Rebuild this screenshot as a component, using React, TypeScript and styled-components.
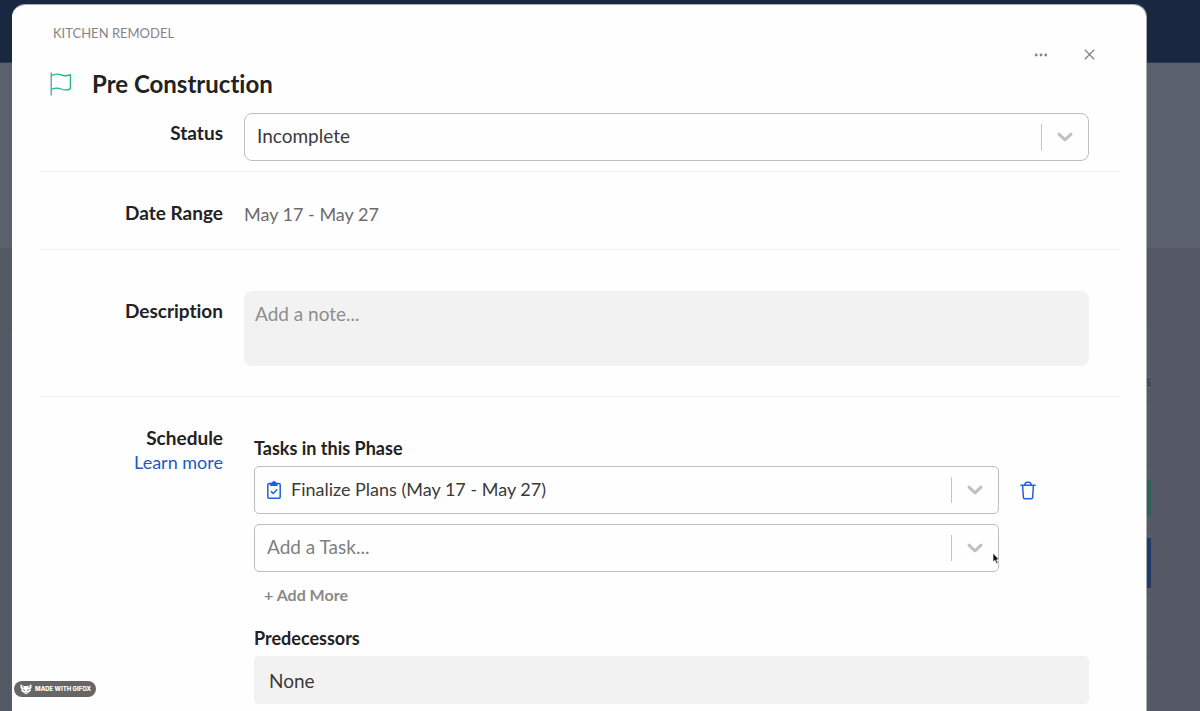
import React from "react";
import styled, { createGlobalStyle } from "styled-components";

const GlobalStyle = createGlobalStyle`
  *, *::before, *::after { box-sizing: border-box; }
  body {
    margin: 0;
    overflow: hidden;
    background: #545965;
    color: #222;
    font-family: Lato, "Liberation Sans", sans-serif;
    font-size: 19px;
    line-height: 24px;
    font-variant-ligatures: none;
  }
  button, input, select, textarea { font: inherit; color: inherit; margin: 0; }
`;

/* Dimmed page behind the dialog */
const Page = styled.div`
  display: flex;
  flex-direction: column;
  min-height: 100vh;
`;
const TopBar = styled.div`
  height: 63px;
  background: #1a2741;
  border-bottom: 1px solid #2f3a51;
`;
const Banner = styled.div`
  height: 185px;
  background: #5a606c;
`;
const Sheet = styled.div`
  flex: 1;
  margin: 77px 49px 0 8px;
  border: 1px solid #4f5561;
  border-width: 1px 0 0 1px;
  border-radius: 8px 8px 0 0;
  background: #555b67;
`;
const SheetRow = styled.div<{ $tall?: boolean }>`
  display: flex;
  justify-content: flex-end;
  align-items: center;
  height: ${(p) => (p.$tall ? 77 : 64)}px;
  padding-top: ${(p) => (p.$tall ? 34 : 0)}px;
  border-bottom: 1px solid #4f5561;
  color: #35383f;
  font-size: 14px;
`;
const Marker = styled.span<{ $color: string; $height: number; $cut?: boolean }>`
  width: 60px;
  height: ${(p) => p.$height}px;
  background: ${(p) => p.$color};
  ${(p) => p.$cut && "clip-path: polygon(0 0, 100% 0, 100% 100%, calc(100% - 5px) 88%, 0 88%);"}
`;

/* Dialog */
const Dialog = styled.main`
  position: fixed;
  inset: 4px 53px 0 12px;
  padding: 20px 27px 0 28px;
  overflow-y: auto;
  scrollbar-width: none;
  border: solid #a9abb0;
  border-width: 1px 1px 0 0;
  border-radius: 13px 13px 0 0;
  background: #fefefe;
`;
const Header = styled.header`
  display: flex;
  justify-content: space-between;
  padding: 0 13px 0 10px;
`;
const Crumb = styled.p`
  margin: 0 0 26px 3px;
  font-size: 13px;
  line-height: 16px;
  color: #858585;
`;
const TitleLine = styled.div`
  display: flex;
  align-items: center;
  gap: 20px;
`;
const Title = styled.h1`
  margin: 0;
  font-size: 24px;
  line-height: 34px;
  font-weight: 700;
`;
const Actions = styled.div`
  display: flex;
  align-items: flex-start;
  gap: 16px;
  padding-top: 13px;
`;
const IconButton = styled.button`
  display: flex;
  align-items: center;
  justify-content: center;
  flex: none;
  width: 33px;
  height: 33px;
  padding: 0;
  border: 0;
  background: none;
  cursor: pointer;
`;

const Row = styled.section<{ $top: number; $bottom: number }>`
  display: grid;
  grid-template-columns: 183px minmax(0, 1fr);
  column-gap: 21px;
  padding: ${(p) => p.$top}px 30px ${(p) => p.$bottom}px 0;
  border-bottom: 1px solid #efefef;
`;
const LabelCell = styled.div`
  display: flex;
  flex-direction: column;
  align-items: flex-end;
  padding-top: 8px;
  font-weight: 700;
`;
const LearnMore = styled.a`
  font-size: 18px;
  font-weight: 400;
  color: #1a5bc4;
  text-decoration: none;
`;
const Dates = styled.p`
  margin: 0;
  padding-top: 9px;
  font-size: 18px;
  color: #6c6c6c;
`;
const Note = styled.textarea`
  display: block;
  width: 100%;
  height: 75px;
  padding: 11px;
  border: 0;
  border-radius: 8px;
  background: #f2f2f2;
  resize: none;
  outline: 0;
  &::placeholder { color: #8e8e8e; opacity: 1; }
`;

const SelectBox = styled.div<{ $radius: number }>`
  display: grid;
  grid-template-columns: minmax(0, 1fr) 1px 46px;
  align-items: center;
  height: 48px;
  border: 1px solid #bfbfbf;
  border-radius: ${(p) => p.$radius}px;
  color: #c0c0c0;
  & > * { grid-row: 1; }
  & > svg { grid-column: 3; pointer-events: none; justify-self: center; }
`;
const NativeSelect = styled.select<{ $muted?: boolean; $indent?: boolean }>`
  grid-column: 1 / -1;
  width: 100%;
  height: 46px;
  padding: 0 60px 2px ${(p) => (p.$indent ? 36 : 12)}px;
  border: 0;
  appearance: none;
  background: none;
  outline: 0;
  font-size: ${(p) => (p.$indent ? 18 : 19)}px;
  color: ${(p) => (p.$muted ? "#7f7f7f" : "#3a3a3a")};
`;
const Divider = styled.span`
  grid-column: 2;
  height: 26px;
  background: #c4c4c4;
`;
const LeadIcon = styled.span`
  grid-column: 1;
  display: flex;
  padding-left: 12px;
  pointer-events: none;
`;

const ScheduleBody = styled.div`
  display: flex;
  flex-direction: column;
  padding: 18px 0 0 10px;
`;
const FieldTitle = styled.h2<{ $gap: number }>`
  margin: 0 0 6px;
  padding-top: ${(p) => p.$gap}px;
  font-size: 18px;
  line-height: 24px;
  font-weight: 700;
`;
const TaskLine = styled.div`
  display: grid;
  grid-template-columns: minmax(0, 1fr) 33px;
  column-gap: 12px;
  align-items: center;
  padding-right: 45px;
  margin-bottom: 10px;
`;
const AddMore = styled.button`
  align-self: flex-start;
  padding: 0 10px;
  border: 0;
  background: none;
  font-size: 16px;
  line-height: 26px;
  font-weight: 700;
  color: #8a8a8a;
  cursor: pointer;
`;
const ReadOnly = styled.input`
  width: 100%;
  height: 48px;
  padding: 0 15px;
  border: 0;
  border-radius: 5px;
  background: #f2f2f2;
  color: #3a3a3a;
  outline: 0;
`;

const Badge = styled.a`
  position: fixed;
  left: 14px;
  bottom: 14px;
  display: flex;
  align-items: center;
  gap: 3px;
  height: 16px;
  padding: 0 5px 0 6px;
  border-radius: 8px;
  background: #666;
  color: #fff;
  font-family: Inter, "Liberation Sans", sans-serif;
  font-size: 6px;
  line-height: 8px;
  font-weight: 800;
  text-decoration: none;
`;
const Pointer = styled.svg`
  position: fixed;
  left: 992px;
  top: 552px;
  pointer-events: none;
`;

const Chevron = () => (
  <svg width="18" height="12" viewBox="0 0 18 12" fill="none" stroke="currentColor" strokeWidth="3" strokeLinecap="round" strokeLinejoin="round">
    <path d="M3 3.2 9 8.8l6-5.6" />
  </svg>
);

interface DropDownProps {
  id: string;
  label?: string;
  text: string;
  radius?: number;
  muted?: boolean;
  icon?: React.ReactNode;
}
const DropDown = ({ id, label, text, radius = 5, muted, icon }: DropDownProps) => (
  <SelectBox $radius={radius}>
    <NativeSelect id={id} aria-label={label} $muted={muted} $indent={!!icon}>
      <option>{text}</option>
    </NativeSelect>
    {icon && <LeadIcon>{icon}</LeadIcon>}
    <Divider />
    <Chevron />
  </SelectBox>
);

const FlagIcon = () => (
  <svg width="22" height="24" viewBox="0 0 22 24" fill="none">
    <path d="M1.4 3.6C5 1.6 8 1.7 11 2.9c3.2 1.3 6.4 1 9.4-.3v14.2c-3 1.4-6.2 1.5-9.4.2-3-1.2-6-1.2-9.6.5" stroke="#22b583" strokeWidth="1.3" strokeLinejoin="round" />
    <path d="M1.2.5v23" stroke="#5f9c95" strokeWidth="1.3" />
  </svg>
);
const ClipboardIcon = () => (
  <svg width="14" height="18" viewBox="0 0 14 18" fill="none" stroke="#2161dc" strokeWidth="1.5" strokeLinejoin="round" strokeLinecap="round">
    <rect x=".8" y="2.6" width="12.4" height="14.6" rx="1.2" />
    <path d="M3.8 2.3h1.5a1.7 1.7 0 0 1 3.4 0h1.5v2.2H3.800z" fill="#2161dc" strokeWidth="1" />
    <path d="m4.400 10.6 1.9 1.9 3.5-3.7" />
  </svg>
);
const TrashIcon = () => (
  <svg width="16" height="19" viewBox="0 0 16 19" fill="none" stroke="#2161dc" strokeWidth="1.5" strokeLinejoin="round" strokeLinecap="round">
    <path d="M1 4.300h14M4.600 4.100C5.200 2.200 6 1.300 7 1.300h2c1 0 1.800.9 2.400 2.800M2.600 4.500l.8 12.200c.1.7.5 1.100 1.200 1.100h6.800c.7 0 1.100-.4 1.200-1.100l.8-12.200" />
  </svg>
);

export default function App() {
  return (
    <>
      <GlobalStyle />
      <Page aria-hidden="true">
        <TopBar />
        <Banner />
        <Sheet>
          <SheetRow $tall>s</SheetRow>
          <SheetRow />
          <SheetRow>
            <Marker $color="#2f6159" $height={37} $cut />
          </SheetRow>
          <SheetRow>
            <Marker $color="#213a68" $height={50} />
          </SheetRow>
          <SheetRow />
          <SheetRow />
        </Sheet>
      </Page>

      <Dialog role="dialog" aria-labelledby="phase-title">
        <Header>
          <div>
            <Crumb>KITCHEN REMODEL</Crumb>
            <TitleLine>
              <FlagIcon />
              <Title id="phase-title">Pre Construction</Title>
            </TitleLine>
          </div>
          <Actions>
            <IconButton type="button" aria-label="More options">
              <svg width="14" height="4" viewBox="0 0 14 4" fill="#858585">
                <circle cx="2.2" cy="2" r="1.4" />
                <circle cx="7" cy="2" r="1.4" />
                <circle cx="11.8" cy="2" r="1.4" />
              </svg>
            </IconButton>
            <IconButton type="button" aria-label="Close">
              <svg width="11" height="11" viewBox="0 0 11 11" stroke="#858585" strokeWidth="1.3">
                <path d="m.8.8 9.4 9.4M10.2.8.8 10.2" />
              </svg>
            </IconButton>
          </Actions>
        </Header>

        <Row $top={12} $bottom={10}>
          <LabelCell>
            <label htmlFor="status">Status</label>
          </LabelCell>
          <DropDown id="status" text="Incomplete" radius={8} />
        </Row>

        <Row $top={21} $bottom={23}>
          <LabelCell>Date Range</LabelCell>
          <Dates>May 17 - May 27</Dates>
        </Row>

        <Row $top={41} $bottom={30}>
          <LabelCell>
            <label htmlFor="description">Description</label>
          </LabelCell>
          <Note id="description" placeholder="Add a note..." />
        </Row>

        <Row $top={21} $bottom={30}>
          <LabelCell>
            Schedule
            <LearnMore href="#learn-more">Learn more</LearnMore>
          </LabelCell>
          <ScheduleBody>
            <FieldTitle $gap={0}>Tasks in this Phase</FieldTitle>
            <TaskLine>
              <DropDown id="task-1" label="Task" text="Finalize Plans (May 17 - May 27)" icon={<ClipboardIcon />} />
              <IconButton type="button" aria-label="Remove task">
                <TrashIcon />
              </IconButton>
            </TaskLine>
            <TaskLine>
              <DropDown id="task-2" label="New task" text="Add a Task..." muted />
            </TaskLine>
            <AddMore type="button">+ Add More</AddMore>
            <FieldTitle $gap={18}>
              <label htmlFor="predecessors">Predecessors</label>
            </FieldTitle>
            <ReadOnly id="predecessors" readOnly value="None" />
          </ScheduleBody>
        </Row>
      </Dialog>

      <Badge href="#gifox">
        <svg width="12" height="12" viewBox="0 0 12 12" fill="#fff">
          <path d="M.6 1.2 3.7 3h4.6l3.1-1.8.2 3.6-1.3 1.4.6 1.5L6 11.6 1.1 7.7l.6-1.5L.4 4.8z" />
          <path d="m1.8 3 2 1.6M10.2 3l-2 1.6M3 6.4l2 1.3M9 6.4 7 7.7M5.3 9.7h1.4" stroke="#666" strokeWidth=".9" />
        </svg>
        MADE WITH GIFOX
      </Badge>
      <Pointer width="8" height="13" viewBox="0 0 8 13">
        <path d="M1 1v9.2l2-1.9 1.5 3.5 1.5-.7-1.5-3.3h2.700z" fill="#111" stroke="#fff" strokeWidth=".7" />
      </Pointer>
    </>
  );
}
